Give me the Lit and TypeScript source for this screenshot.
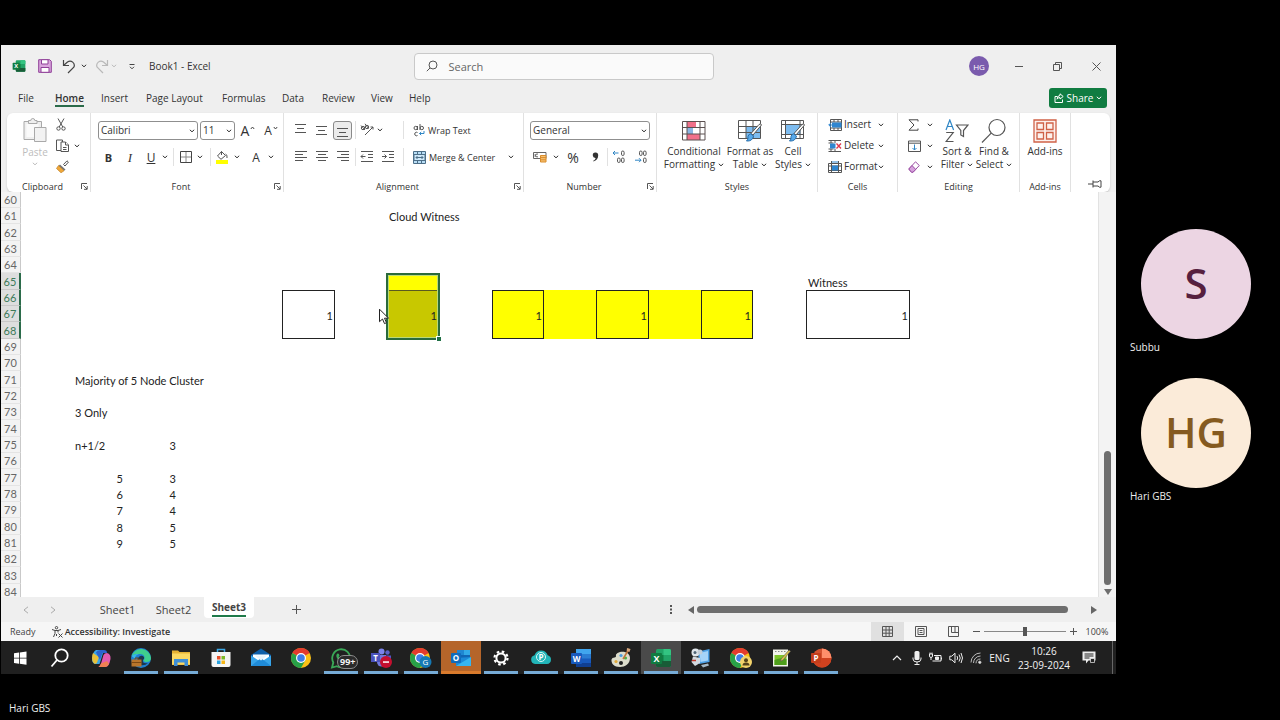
import { LitElement, html, css, nothing } from "lit";
import { customElement, state } from "lit/decorators.js";
import { classMap } from "lit/directives/class-map.js";

const chev = html`<svg class="chev" width="6" height="4" viewBox="0 0 6 4" fill="none" stroke="currentColor"><path d="M.8.8 3 2.8 5.2.8"/></svg>`;
const line = (d: string, w = 16, h = 16) =>
  html`<svg width=${w} height=${h} viewBox="0 0 ${w} ${h}" fill="none" stroke="#555"><path d=${d} /></svg>`;

const excelLogo = (s: number) => html`<svg width=${s} height=${s} viewBox="0 0 22 22">
  <rect x="6" y="2" width="15" height="18" rx="1.5" fill="#21a366"/><path d="M6 8h7.500v6H6z" fill="#107c41"/><path d="M13.500 2H19.500a1.500 1.500 0 0 1 1.500 1.500V8h-7.500z" fill="#33c481"/>
  <path d="M6 14h15v4.500a1.500 1.500 0 0 1-1.500 1.500h-12A1.500 1.500 0 0 1 6 18.500z" fill="#185c37"/><rect x="1" y="6" width="11" height="11" rx="1" fill="#107c41"/>
  <text x="6.500" y="14.800" font-size="9" font-weight="700" text-anchor="middle" fill="#fff" font-family="Open Sans, sans-serif">X</text></svg>`;

const chromeParts = html`<svg width="22" height="22" viewBox="0 0 22 22">
  <circle cx="11" cy="11" r="10" fill="#fbc116"/><path d="M11 11 2.340 6A10 10 0 0 1 19.660 6z" fill="#e33b2e"/>
  <path d="M2.340 6A10 10 0 0 0 11 21l4.500-8L11 11z" fill="#28a148"/><circle cx="11" cy="11" r="5" fill="#fff"/><circle cx="11" cy="11" r="3.800" fill="#3f7de8"/></svg>`;

const icons = {
  save: html`<svg width="14" height="14" viewBox="0 0 14 14" fill="#d9a5dc" stroke="#8f3f98"><path d="M.7.700h11l1.600 1.600v11H.7z"/><path d="M3.500.700h6.500v4.300H3.500z" fill="#fff"/><path d="M3 13.300V8.500h8v4.800z" fill="#fff"/></svg>`,
  undo: html`<svg width="14" height="15" viewBox="0 0 14 15" fill="none" stroke="#444" stroke-width="1.200"><path d="M1.500 1v5.500H7M1.800 6.200 5.500 3a4.200 4.200 0 0 1 6.300 5.200L6 14"/></svg>`,
  redo: html`<svg width="14" height="15" viewBox="0 0 14 15" fill="none" stroke="#b9b9b9" stroke-width="1.200"><path d="M12.500 1v5.500H7M12.200 6.200 8.500 3a4.200 4.200 0 0 0-6.300 5.200L8 14"/></svg>`,
  custom: html`<svg width="6" height="7" viewBox="0 0 6 7" fill="none" stroke="#444"><path d="M.5 1.500h5M1 3.800l2 2 2-2"/></svg>`,
  search: html`<svg width="12" height="12" viewBox="0 0 12 12" fill="none" stroke="#555"><circle cx="7" cy="5" r="4"/><path d="M4 8 .8 11.200"/></svg>`,
  share: html`<svg width="10" height="10" viewBox="0 0 10 10" fill="none" stroke="#fff"><path d="M3.500 3.500h-2.500v6h7.500V6.500M6 .8 9.200 3.500 6 6V4.500Q4 4.400 3 6.200 3.300 2.800 6 2.400z"/></svg>`,
  paste: html`<svg width="24" height="26" viewBox="0 0 24 26" fill="#efefef" stroke="#a9a9a9"><path d="M1 4.500h17.500v18H1z"/><path d="M3.500 7h12v13h-12z" fill="#fafafa" stroke="none"/><path d="M5.500 6.500v-3h2.300a2 2 0 0 1 4 0H14v3z"/><path d="M11.500 10.500h11.500v14H11.500z" fill="#f2f2f2"/></svg>`,
  cut: html`<svg width="10" height="13" viewBox="0 0 10 13" fill="none" stroke="#555"><path d="M2 .5 6.800 9M8 .5 3.200 9"/><circle cx="2.500" cy="10.500" r="1.700"/><circle cx="7.500" cy="10.500" r="1.700"/></svg>`,
  copy: html`<svg width="13" height="13" viewBox="0 0 13 13" fill="#fff" stroke="#555"><path d="M.5 1h6v10.500h-6z"/><path d="M5 3h4.500l3 3v6.500H5z"/><path d="M9.500 3v3h3M7 8.500h3.500M7 10.500h3.500"/></svg>`,
  painter: html`<svg width="13" height="13" viewBox="0 0 13 13"><path d="M7.500 4.500 11 .8l1.400 1.300L9 6z" fill="#fff" stroke="#555"/><path d="m4 4.500 5.500 5-1.200 1.300L2.500 6z" fill="#777"/><path d="M2.500 5.500 8 10.800l-3 2L.5 8.500z" fill="#f0a83a" stroke="#b87514" stroke-width=".6"/></svg>`,
  launch: html`<svg width="7" height="7" viewBox="0 0 7 7" fill="none" stroke="#555"><path d="M.5 6V.5H6M2.500 2.500 6 6M6.200 3v3.300H3"/></svg>`,
  border: html`<svg width="12" height="12" viewBox="0 0 12 12" fill="none" stroke="#444"><path d="M.5.500h11v11H.5z"/><path d="M6 1v10M1 6h10" stroke="#888"/></svg>`,
  fill: html`<svg width="14" height="14" viewBox="0 0 14 14" fill="none"><path d="M1 10h12v4H1z" fill="#ff0"/><path d="m6.500 1.500 4 4-4.500 3.800L2.500 6zM6.500 1.500V5M10.500 4q2 .500 1.500 4" stroke="#555"/></svg>`,
  orient: html`<svg width="14" height="14" viewBox="0 0 14 14" fill="none" stroke="#555"><circle cx="3" cy="5" r="1.700"/><circle cx="7" cy="4" r="1.700"/><path d="M1 2.500 5 7M5 .800 8.500 5.500M5 12 13 4M10.500 4H13v2.500"/></svg>`,
  wrap: html`<svg width="12" height="13" viewBox="0 0 12 13" fill="none" stroke="#555"><circle cx="2.700" cy="4" r="1.700"/><path d="M4.500 2v4M7 0v6"/><circle cx="8.800" cy="4" r="1.700"/><path d="M4.500 8.500a1.800 1.800 0 1 0 0 3"/><path d="M11 7v2.500H6.500M8.200 8 6.500 9.500l1.700 1.700" stroke="#2f86c5"/></svg>`,
  merge: html`<svg width="13" height="13" viewBox="0 0 13 13" fill="#b8ddf5" stroke="#4d6f88"><path d="M.5.500h12v12H.5z"/><path d="M1 3.500h11v6H1z" fill="#cfe9fa"/><path d="M4.500.500v3M8.500.500v3M4.500 9.500v3M8.500 9.500v3M3 6.500h7M4.500 5 3 6.500 4.500 8M8.500 5 10 6.500 8.500 8" fill="none"/></svg>`,
  money: html`<svg width="14" height="12" viewBox="0 0 14 12" fill="none" stroke="#666"><path d="M.5 1.500h12.500v6H.5z"/><path d="M5 3.200a1.500 1.500 0 1 0 0 2.500M2.200 3v3"/><path d="M7.500 4.500h5.500v6.500H7.500z" fill="#f7c173" stroke="#d98c2b"/><path d="M7.500 6.600H13M7.500 8.800H13" stroke="#d98c2b"/></svg>`,
  comma: html`<svg width="7" height="10" viewBox="0 0 7 10"><path d="M3.300.500a2.800 2.800 0 0 1 2.900 2.900C6.200 6 4.500 8.500 1.500 9.500L1.200 8.800C2.800 8 3.500 7 3.600 5.900A2.700 2.700 0 1 1 3.300.5z" fill="#333"/></svg>`,
  dec: (inc: boolean) => html`<svg width="14" height="14" viewBox="0 0 14 14" fill="none" stroke="#555"><rect x=${inc ? 9.5 : 5.5} y="1" width="2.600" height="4.500" rx="1.300"/><rect x="9.500" y="8" width="2.600" height="4.500" rx="1.300"/>
    ${inc ? html`<svg><rect x="5.500" y="8" width="2.600" height="4.500" rx="1.300" stroke="#555"/><path d="M6.500 3H1M3 1 1 3l2 2" stroke="#2f86c5"/></svg>` : html`<svg><rect x="9.500" y="1" width="2.600" height="4.500" rx="1.300" stroke="#555"/><path d="M1 10.200h6M5 8.200l2 2-2 2" stroke="#2f86c5"/></svg>`}</svg>`,
  cond: html`<svg width="24" height="20" viewBox="0 0 24 20" fill="none"><path d="M.5.500h22.500v18.500H.5z" fill="#fff"/><path d="M5 .500h9v6H5zM5 13h13v6H5z" fill="#f0708a"/><path d="M5 6.500h6V13H5z" fill="#8bb6e4"/><path d="M.5.500h22.500v18.500H.5zM5 .500V19M18 .500V19M.5 6.500H23M.5 13H23" stroke="#5b5050"/></svg>`,
  fmtTable: html`<svg width="26" height="24" viewBox="0 0 26 24" fill="none"><path d="M1.500 1.500h22v18h-22z" fill="#fff"/><path d="M9 7.500h14.500v12H9z" fill="#7dbcf0"/><path d="M1.500 1.500h22v18h-22zM9 1.500v18M16 1.500v18M1.500 7.500h22M1.500 13.500h22" stroke="#555"/><path d="M24.500 6 16 16l-2-1.500L22 5.500q2-1.500 2.500.5z" fill="#fff" stroke="#555"/><path d="M13.800 14.800 16.500 17q-1 5.500-7 5 2-1.500 1.500-4.500.5-2.500 2.800-2.700z" fill="#58a9ea" stroke="#2870ad"/></svg>`,
  cellSty: html`<svg width="26" height="24" viewBox="0 0 26 24" fill="none"><path d="M1.500 1.500h22v18h-22z" fill="#fff"/><path d="M6 5.500h14.500v10H6z" fill="#7dbcf0"/><path d="M1.500 1.500h22v18h-22zM5.500 1.500v18M20 1.500v18M1.500 5.500h22M1.500 15.500h22" stroke="#555"/><path d="M24.500 6 16 16l-2-1.500L22 5.500q2-1.500 2.500.5z" fill="#fff" stroke="#555"/><path d="M13.800 14.800 16.500 17q-1 5.500-7 5 2-1.500 1.500-4.500.5-2.500 2.800-2.700z" fill="#58a9ea" stroke="#2870ad"/></svg>`,
  insert: html`<svg width="14" height="12" viewBox="0 0 14 12" fill="none" stroke="#555"><path d="M2.500.500h11v11h-11zM2.500 3h11M2.500 9h11M6 .500V3M10 .500V3M6 9v2.500M10 9v2.500"/><path d="M4 3.500h9.500v5H4z" fill="#2f86d0" stroke="none"/><path d="M6 6H.8M3 3.800.8 6 3 8.200" stroke="#2f86d0"/></svg>`,
  del: html`<svg width="14" height="12" viewBox="0 0 14 12" fill="none" stroke="#555"><path d="M.5.500h12.500M.5 3h5M.5 9h5M.5 11.500h12.500M3 .500V3M7 .500V3M7 9v2.500M3 9v2.500"/><path d="M2 3.500h5.500v5H2z" fill="#2f86d0" stroke="none"/><path d="m8.500 3.500 4.500 5M13 3.500l-4.500 5" stroke="#e0364a" stroke-width="1.300"/></svg>`,
  format: html`<svg width="14" height="12" viewBox="0 0 14 12" fill="none" stroke="#555"><path d="M.5 2.500h13v9H.5zM.5 5h13M.5 9.500h13M3.500 0v11.500M10.500 0v11.500"/><path d="M4 4.500h6v5H4z" fill="#2f86d0" stroke="none"/><path d="M4 1h6" stroke="#2f86d0"/></svg>`,
  sigma: html`<svg width="11" height="12" viewBox="0 0 11 12" fill="none" stroke="#444"><path d="M10 2.500V.800H1L6 6l-5 5.200h9V9.500"/></svg>`,
  fillDown: html`<svg width="13" height="12" viewBox="0 0 13 12" fill="none" stroke="#555"><path d="M.5 1h12v10.500H.5zM.5 3.200h12"/><path d="M6.500 4.500V10M4.500 8l2 2 2-2" stroke="#2f86c5"/></svg>`,
  eraser: html`<svg width="12" height="12" viewBox="0 0 12 12" stroke="#9a4da3"><path d="M7.500.800 11.300 4.500 5 11.200H3.500L.8 8z" fill="#fff"/><path d="m4 4.500 3.800 4L5 11.200H3.500L.8 8z" fill="#d6a2dc"/></svg>`,
  sort: html`<svg width="24" height="24" viewBox="0 0 24 24" fill="none"><path d="M1 11 4.800 1l3.800 10M2.300 7.500h5" stroke="#2f86c5" stroke-width="1.200"/><path d="M1.200 13.500h7L1.200 22.500h7.300" stroke="#555" stroke-width="1.200"/><path d="M11.500 6h11.500l-4.500 5.500v6l-2.700-1.500v-4.500z" stroke="#555" stroke-width="1.200"/></svg>`,
  find: html`<svg width="26" height="26" viewBox="0 0 26 26" fill="none" stroke="#555" stroke-width="1.200"><circle cx="16" cy="9.500" r="8"/><path d="M10.200 15.200 1 24.500"/></svg>`,
  addins: html`<svg width="24" height="24" viewBox="0 0 24 24" fill="none" stroke="#cf6147" stroke-width="1.300"><path d="M1 1h22v22H1zM4 4h6.500v6.500H4zM13.500 4H20v6.500h-6.500zM4 13.500h6.500V20H4zM13.500 13.500H20V20h-6.500z" fill="#fdf1ed"/></svg>`,
  pin: html`<svg width="14" height="8" viewBox="0 0 14 8" fill="none" stroke="#444"><path d="M0 4h5M5 .500v7M5 2h5l1.500-1.200H13v6.400h-1.500L10 6H5"/></svg>`,
  access: html`<svg width="13" height="12" viewBox="0 0 13 12" fill="none" stroke="#444"><circle cx="5.500" cy="1.700" r="1.200"/><path d="M1 3.500 4 4.500v3L2.500 11M10 3.500 7 4.500v2M4 4.500h3M5.500 8v2M7.500 7.500l4 4M11.500 7.500l-4 4"/></svg>`,
};

const apps: { name: string; icon: unknown; run?: boolean; cls?: string; badge?: string }[] = [
  { name: "Start", icon: html`<svg width="22" height="22" viewBox="0 0 22 22"><path d="M4 6.200l5-.7v5.200H4zM9.800 5.400 16.500 4.500v6.200h-6.700zM4 11.500h5v5.200l-5-.7zM9.800 11.500h6.700v6.200l-6.700-.9z" fill="#fff"/></svg>` },
  { name: "Search", icon: html`<svg width="22" height="22" viewBox="0 0 22 22" fill="none" stroke="#fff" stroke-width="1.800"><circle cx="11.500" cy="8.500" r="6.200"/><path d="m7 13-5.500 6.500"/></svg>` },
  { name: "Copilot", icon: html`<svg width="22" height="22" viewBox="0 0 22 22"><path d="M6 3h8L9.500 17H5q-3-1-3-5 1-8 4-9z" fill="#3aa5e8"/><path d="M2 11q0-3 1-5l6 4-2 5.500q-1 2-3 1Q2 15 2 11z" fill="#e9c13a"/><path d="M14 3q3 0 3 3h-4.500L10 13 6 5.500Q7 3 10 3z" fill="#2b63cf"/><path d="M17 6q4 1 3.500 6-1.500 8-5 8H8.500q2-1 3-5l2-7q1-2 3.500-2z" fill="#e35bb0"/><path d="M11 16.500 17 14l2 3q-1.500 3-3.500 3H8.500q1.500-1 2.500-3.500z" fill="#f08052"/></svg>` },
  { name: "Edge", run: true, icon: html`<svg width="22" height="22" viewBox="0 0 22 22"><circle cx="11" cy="11" r="10" fill="#1f7fd0"/><path d="M1.500 9A10 10 0 0 1 21 11q0 4-4.500 4-3 0-3-2 1.500-1 1-3Q13.500 7 10 7 4 6.500 1.500 9z" fill="#3fcf8d"/><path d="M1.500 9Q4 6.500 9 7q-4 1-4 5-2-2-3.500-3z" fill="#35b8e8"/><path d="M14 10q-3-3-6 1-1 4 2 7 5 1 8-2-6 1-5-3 1.500-1 1-3z" fill="#1f1f1f" opacity=".75"/><path d="M1.500 12.500h10v7h-10z" fill="#b9752b"/><path d="M5 12.500v-1.500h3v1.500M1.500 15.500h10" stroke="#7c4913" fill="none"/></svg>` },
  { name: "File Explorer", run: true, icon: html`<svg width="22" height="22" viewBox="0 0 22 22"><path d="M2 3.500h6l1.500 1.500H20v13H2z" fill="#e6b234"/><path d="M2 6.500h18v11H2z" fill="#fbd862"/><path d="M4 12h14v7h-3.500v-3.500h-7V19H4z" fill="#3f8fd6"/></svg>` },
  { name: "Store", icon: html`<svg width="22" height="22" viewBox="0 0 22 22"><path d="M7.500 5.500V2.500h7v3" fill="none" stroke="#3ba7e5" stroke-width="1.500"/><path d="M1.500 5h19v13a2 2 0 0 1-2 2h-15a2 2 0 0 1-2-2z" fill="#f4f4f4"/><path d="M7 9h3.500v3.500H7z" fill="#e8502a"/><path d="M11.500 9H15v3.500h-3.500z" fill="#7db928"/><path d="M7 13.500h3.500V17H7z" fill="#2aa3e0"/><path d="M11.500 13.500H15V17h-3.500z" fill="#f6b616"/></svg>` },
  { name: "Mail", icon: html`<svg width="22" height="22" viewBox="0 0 22 22"><path d="M1 8 11 1.500 21 8v2H1z" fill="#0f5fa8"/><path d="M3 7.500h16v8H3z" fill="#fff"/><path d="M1 8.500 11 15 21 8.500V19H1z" fill="#38a5ea"/><path d="M1 19 11 11 21 19z" fill="#1f8bd8"/><path d="m5 8.500 6 5 6-5z" fill="#e8f4fc"/></svg>` },
  { name: "Chrome", icon: chromeParts },
  { name: "WhatsApp", run: true, badge: "99+", icon: html`<svg width="22" height="22" viewBox="0 0 22 22" fill="none"><path d="M2 20.500 3.300 15.500A9 9 0 1 1 7 19.200z" stroke="#3aa857" stroke-width="1.800"/><path d="M7.500 6.500q1.500-.5 2 2l-.8 1.200q1 2 3 2.800l1.200-1q2.200.6 1.800 2.200-1.500 2-4 1Q7 13 6.300 9q0-1.800 1.200-2.500z" fill="#3aa857"/></svg>` },
  { name: "Teams", run: true, icon: html`<svg width="22" height="22" viewBox="0 0 22 22"><circle cx="11.500" cy="4.500" r="3" fill="#7b83eb"/><circle cx="17.500" cy="5.500" r="2.200" fill="#5b62c8"/><path d="M7 8h9v7a4.500 4.500 0 0 1-9 0z" fill="#7078dc"/><path d="M16 8.500h5v5h-5z" fill="#5059c9"/><path d="M1 6h9v9H1z" fill="#4b53bc"/><text x="5.500" y="13.500" font-size="8" font-weight="700" text-anchor="middle" fill="#fff" font-family="Open Sans, sans-serif">T</text><circle cx="16" cy="15" r="6" fill="#c50f2f"/><path d="M13 14.300h6v1.500h-6z" fill="#fff"/></svg>` },
  { name: "Chrome, profile G", run: true, icon: html`<svg width="24" height="22" viewBox="0 0 24 22"><circle cx="11" cy="11" r="10" fill="#fbc116"/><path d="M11 11 2.340 6A10 10 0 0 1 19.660 6z" fill="#e33b2e"/><path d="M2.340 6A10 10 0 0 0 11 21l4.500-8L11 11z" fill="#28a148"/><circle cx="11" cy="11" r="5" fill="#fff"/><circle cx="11" cy="11" r="3.800" fill="#3f7de8"/><circle cx="16.500" cy="15" r="6" fill="#1579b5"/><text x="16.500" y="18" font-size="8" text-anchor="middle" fill="#fff" font-family="Open Sans, sans-serif">G</text></svg>` },
  { name: "Outlook", run: true, cls: "alert", icon: html`<svg width="22" height="22" viewBox="0 0 22 22"><path d="M7 3h13v14H7z" fill="#1066b5"/><path d="M13.500 3H20v5h-6.500z" fill="#32a9e7"/><path d="M7 3h6.500v5H7z" fill="#1f86d2"/><path d="m6 11 15-1v9H6z" fill="#1b8ad8"/><path d="m6 19 15-9v9z" fill="#35b5f0"/><rect x="1" y="6" width="10" height="10" rx="1" fill="#0f6cbd"/><text x="6" y="14" font-size="8" font-weight="700" text-anchor="middle" fill="#fff" font-family="Open Sans, sans-serif">O</text></svg>` },
  { name: "Settings", run: true, icon: html`<svg width="22" height="22" viewBox="0 0 22 22" fill="none" stroke="#fff"><circle cx="11" cy="11" r="4.600" stroke-width="2"/><circle cx="11" cy="11" r="6.500" stroke-width="2.200" stroke-dasharray="2.550 2.550"/></svg>` },
  { name: "Cloud", run: true, icon: html`<svg width="22" height="22" viewBox="0 0 22 22"><path d="M5 17a4.500 4.500 0 0 1-.5-8.800 7 7 0 0 1 13.200 0A4.500 4.500 0 0 1 17 17z" fill="#22b5b8"/><circle cx="11" cy="10" r="4.500" fill="none" stroke="#d9f5f5"/><text x="11" y="13" font-size="8" font-weight="700" text-anchor="middle" fill="#fff" font-family="Open Sans, sans-serif">P</text></svg>` },
  { name: "Word", run: true, icon: html`<svg width="22" height="22" viewBox="0 0 22 22"><rect x="6" y="2" width="15" height="18" rx="1.500" fill="#2b7cd3"/><path d="M6 2h15v5H6z" fill="#41a5ee"/><path d="M6 11.500h15V16H6z" fill="#185abd"/><path d="M6 16h15v4H6z" fill="#103f91"/><rect x="1" y="6" width="11" height="11" rx="1" fill="#185abd"/><text x="6.500" y="14.500" font-size="8" font-weight="700" text-anchor="middle" fill="#fff" font-family="Open Sans, sans-serif">W</text></svg>` },
  { name: "Paint", run: true, icon: html`<svg width="22" height="22" viewBox="0 0 22 22"><path d="M10 5c6-1 10 2 10 6 0 6-5 9-10 9-6 0-9-3.500-8.500-7.500q.5-2 3-2 2-.5 1.500-3Q7 5.500 10 5z" fill="#dcdccb"/><circle cx="11" cy="8.500" r="1.600" fill="#4b9be0"/><circle cx="15.500" cy="11" r="1.600" fill="#4cb04c"/><circle cx="6" cy="14.500" r="1.600" fill="#e0a93a"/><circle cx="11" cy="16" r="2" fill="#1f1f1f"/><path d="m13 12 6-10" stroke="#c0763b" stroke-width="1.500"/><path d="m17 1 3.500 1-1 3-2.800-1z" fill="#d9a77c"/></svg>` },
  { name: "Excel", run: true, cls: "current", icon: excelLogo(22) },
  { name: "Remote tools", run: true, icon: html`<svg width="22" height="22" viewBox="0 0 22 22"><path d="M8 4.500 19.500 2v13L9 17z" fill="#4ea1e6"/><path d="m9.500 6 8.500-2v9.500l-7.500 1.500z" fill="#a5d3f8"/><path d="m11 18 7-1.500 1 2-6 2z" fill="#a6b8c6"/><path d="M3 9.500 10 11v5l-5 3-3.500-4z" fill="#d3dae0"/><circle cx="5.500" cy="5.500" r="4" fill="#dfe5ea"/><circle cx="10" cy="5" r="2.500" fill="#c3ced8"/><circle cx="5" cy="5.500" r="1.500" fill="#4f6475"/><path d="M2 13.500h4" stroke="#c0392b" stroke-width="1.500"/></svg>` },
  { name: "Chrome, profile", run: true, icon: html`<svg width="24" height="22" viewBox="0 0 24 22"><circle cx="11" cy="11" r="10" fill="#fbc116"/><path d="M11 11 2.340 6A10 10 0 0 1 19.660 6z" fill="#e33b2e"/><path d="M2.340 6A10 10 0 0 0 11 21l4.500-8L11 11z" fill="#28a148"/><circle cx="11" cy="11" r="5" fill="#fff"/><circle cx="11" cy="11" r="3.800" fill="#3f7de8"/><circle cx="17" cy="15" r="6" fill="#f3d36b"/><circle cx="17" cy="13.200" r="2" fill="#55431c"/><path d="M13.500 18.500q0-3 3.500-3t3.500 3z" fill="#55431c"/></svg>` },
  { name: "Notepad++", run: true, icon: html`<svg width="22" height="22" viewBox="0 0 22 22"><path d="M3 2.500h15v17H3z" fill="#f2f4ea"/><path d="M4.500 8h12v10h-12z" fill="#7cc528"/><path d="M4.500 13q6-3 12-1v6h-12z" fill="#4e9e1b"/><path d="M5 4.500h11" stroke="#888" stroke-dasharray="1.500 1.500"/><path d="m11 12 8-9 1.500 1.200-7.500 9-2.500 1z" fill="#d8c04a" stroke="#555" stroke-width=".6"/></svg>` },
  { name: "PowerPoint", run: true, icon: html`<svg width="22" height="22" viewBox="0 0 22 22"><circle cx="12" cy="11" r="9.500" fill="#d35230"/><path d="M12 1.500a9.500 9.500 0 0 1 9.500 9.500H12z" fill="#ff8f6b"/><path d="M2.500 11h19a9.500 9.500 0 0 1-19 0z" fill="#d0421f"/><rect x="1" y="6" width="10" height="10" rx="1" fill="#c43e1c"/><text x="6" y="14" font-size="8" font-weight="700" text-anchor="middle" fill="#fff" font-family="Open Sans, sans-serif">P</text></svg>` },
];

type Cell = { text?: string; kind?: string; rows?: number; cols?: number };
const COLS = 21;
const cells: Record<string, Cell> = {
  "61:7": { text: "Cloud Witness" },
  "65:7": { kind: "yellow picked" },
  "65:15": { text: "Witness" },
  "66:5": { text: "1", kind: "num box", rows: 3 },
  "66:7": { text: "1", kind: "num shaded", rows: 3 },
  "66:9": { text: "1", kind: "num yellow box", rows: 3 },
  "66:10": { kind: "yellow", rows: 3 },
  "66:11": { text: "1", kind: "num yellow box", rows: 3 },
  "66:12": { kind: "yellow", rows: 3 },
  "66:13": { text: "1", kind: "num yellow box", rows: 3 },
  "66:15": { text: "1", kind: "num box", rows: 3, cols: 2 },
  "71:1": { text: "Majority of 5 Node Cluster" },
  "73:1": { text: "3 Only" },
  "75:1": { text: "n+1/2" },
  "75:2": { text: "3", kind: "num" },
};
[[5, 3], [6, 4], [7, 4], [8, 5], [9, 5]].forEach(([n, v], i) => {
  cells[`${77 + i}:1`] = { text: String(n), kind: "num" };
  cells[`${77 + i}:2`] = { text: String(v), kind: "num" };
});
const covered = new Set<string>();
for (const [key, c] of Object.entries(cells)) {
  const [r, k] = key.split(":").map(Number);
  for (let i = 0; i < (c.rows ?? 1); i++)
    for (let j = 0; j < (c.cols ?? 1); j++) if (i || j) covered.add(`${r + i}:${k + j}`);
}

const common = css`
  * { box-sizing: border-box; }
  button { font: inherit; color: inherit; background: none; border: 0; padding: 0; margin: 0; display: flex; align-items: center; justify-content: center; white-space: nowrap; }
  svg { display: block; flex: none; }
`;

@customElement("excel-ribbon")
class ExcelRibbon extends LitElement {
  static styles = [common, css`
    :host { display: grid; grid-template-columns: 84px 193px 240px 133px 161px 80px 122px 51px 1fr; height: 79px; margin: 0 6px; background: #fff; border-radius: 6px; box-shadow: 0 1px 2px #c4c4c4; color: #333; font-size: 10px; line-height: 13px; }
    .group { display: flex; flex-direction: column; border-right: 1px solid #e1e1e1; min-width: 0; }
    .body { flex: 1; min-height: 0; }
    .foot { display: grid; height: 18px; align-items: center; text-align: center; font-size: 9px; white-space: nowrap; }
    .foot.launches { grid-template-columns: 1fr 12px; }
    .lines { display: flex; flex-direction: column; gap: 7px; padding-top: 7px; }
    .line { display: grid; height: 20px; align-items: center; justify-items: center; }
    .sep { width: 1px; height: 18px; background: #e1e1e1; }
    .clip { display: grid; grid-template-columns: 42px 28px; padding: 4px 0 0 7px; }
    .big { flex-direction: column; justify-content: flex-start; }
    .faded { color: #bdbdbd; }
    .clip .big { gap: 3px; }
    .stack { display: grid; grid-template-rows: repeat(3, 21px); align-items: center; padding-top: 1px; }
    .stack button { gap: 8px; justify-content: flex-start; }
    .clip .stack { padding-top: 0; margin-top: -3px; }
    .clip .stack button { gap: 5px; }
    .font1 { grid-template-columns: 100px 35px 22px 20px; column-gap: 2px; padding-left: 7px; justify-content: start; }
    .font2 { grid-template-columns: 21px 22px 20px 8px 8px 17px 12px 8px 16px 14px 24px 6px; padding-left: 7px; justify-content: start; }
    .al1, .al2 { padding-left: 6px; }
    .al1 { grid-template-columns: 21px 21px 21px 4px 20px 6px 30px 1fr; }
    .al2 { grid-template-columns: 21px 21px 21px 4px 20px 22px 14px 1fr; }
    .far { justify-self: end; margin-right: 9px; }
    .cmd { justify-self: start; gap: 3px; font-size: 9px; }
    .cmd .chev { margin-left: 10px; }
    .boxed { width: 19px; height: 19px; border: 1px solid #8a8a8a; border-radius: 3px; background: #ececec; }
    .num1 { padding: 0 6px; }
    .num2 { grid-template-columns: 20px 11px 24px 20px 4px 20px 24px; padding-left: 6px; }
    .field { position: relative; width: 100%; display: block; }
    .field .chev { position: absolute; right: 3px; top: 8px; pointer-events: none; }
    select { appearance: none; width: 100%; height: 19px; display: block; font: inherit; color: #333; background: #fff; border: 1px solid #8f8f8f; border-radius: 3px; padding: 0 2px; }
    .glyph { font-size: 11px; }
    .glyph.lg { font-size: 14px; }
    .glyph.md { font-size: 12px; }
    .b { font-weight: 700; } .i { font-style: italic; font-family: "Liberation Serif", serif; font-size: 13px; } .u { text-decoration: underline; }
    .grow { gap: 1px; align-items: flex-start; }
    .grow .chev { margin-top: 2px; }
    .tiles { display: grid; padding-top: 4px; }
    .tiles .pic { height: 28px; display: flex; align-items: center; justify-content: center; }
    .tiles .big span { display: flex; align-items: center; gap: 3px; }
    .styles { grid-template-columns: 60px 52px 34px; padding-left: 7px; }
    .cells { padding-left: 10px; }
    .cells button { display: grid; grid-template-columns: 16px 34px 6px; justify-items: start; gap: 0; }
    .edit { display: grid; grid-template-columns: 38px 40px 34px; padding-left: 1px; }
    .edit .tiles { grid-column: 2 / 4; grid-template-columns: 40px 34px; }
    .edit .stack { padding-left: 9px; }
    .edit .stack button { display: grid; grid-template-columns: 19px 6px; gap: 0; }
    .tail { display: flex; align-items: flex-end; justify-content: center; padding: 0 0 7px 8px; }
  `];
  render() {
    const foot = (t: string, launch = false) => html`<div class=${classMap({ foot: true, launches: launch })}><span>${t}</span>${launch ? html`<button aria-label="${t} settings">${icons.launch}</button>` : nothing}</div>`;
    const tile = (pic: unknown, a: string, b?: string) => html`<button class="big"><span class="pic">${pic}</span><span>${a}</span>${b ? html`<span>${b}${chev}</span>` : nothing}</button>`;
    return html`
      <div class="group"><div class="body clip">
        <button class="big faded">${icons.paste}<span>Paste</span>${chev}</button>
        <div class="stack"><button aria-label="Cut">${icons.cut}</button><button aria-label="Copy">${icons.copy}${chev}</button><button aria-label="Format Painter">${icons.painter}</button></div>
      </div>${foot("Clipboard", true)}</div>
      <div class="group"><div class="body lines">
        <div class="line font1">
          <label class="field"><select aria-label="Font"><option>Calibri</option></select>${chev}</label>
          <label class="field"><select aria-label="Font size"><option>11</option></select>${chev}</label>
          <button class="grow glyph lg" aria-label="Increase font size">A<svg class="chev" width="5" height="4" viewBox="0 0 5 4" fill="none" stroke="#444"><path d="m.8 3 1.700-2 1.700 2"/></svg></button>
          <button class="grow glyph md" aria-label="Decrease font size">A<svg class="chev" width="5" height="4" viewBox="0 0 5 4" fill="none" stroke="#444"><path d="m.8 1 1.700 2 1.700-2"/></svg></button>
        </div>
        <div class="line font2">
          <button class="glyph b">B</button><button class="glyph i">I</button><button class="glyph md u">U</button><button aria-label="Underline options">${chev}</button><i class="sep"></i>
          <button aria-label="Borders">${icons.border}</button><button aria-label="Border options">${chev}</button><i class="sep"></i>
          <button aria-label="Fill colour">${icons.fill}</button><button aria-label="Fill options">${chev}</button><button class="glyph md">A</button><button aria-label="Font colour options">${chev}</button>
        </div>
      </div>${foot("Font", true)}</div>
      <div class="group"><div class="body lines">
        <div class="line al1">
          <button aria-label="Top align">${line("M2 2.500h11M4 6.500h7M2 10.500h11")}</button><button aria-label="Middle align">${line("M2 4.500h11M4 8.500h7M2 12.500h11")}</button><button class="boxed" aria-label="Bottom align">${line("M2 6.500h11M4 10.500h7M2 14.500h11")}</button><i class="sep"></i>
          <button aria-label="Orientation">${icons.orient}</button><button aria-label="Orientation options">${chev}</button><i class="sep far"></i>
          <button class="cmd">${icons.wrap}Wrap Text</button>
        </div>
        <div class="line al2">
          <button aria-label="Align left">${line("M2 2.500h12M2 5.500h8M2 8.500h12M2 11.500h8")}</button><button aria-label="Centre">${line("M2 2.500h12M4 5.500h8M2 8.500h12M4 11.500h8")}</button><button aria-label="Align right">${line("M2 2.500h12M6 5.500h8M2 8.500h12M6 11.500h8")}</button><i class="sep"></i>
          <button aria-label="Decrease indent">${line("M2 2.500h12M9 5.500h5M9 8.500h5M2 12.500h12M6.500 7.500H2M4 5.500l-2 2 2 2")}</button><button aria-label="Increase indent">${line("M2 2.500h12M9 5.500h5M9 8.500h5M2 12.500h12M2 7.500h4.500M4.500 5.500l2 2-2 2")}</button><i class="sep far"></i>
          <button class="cmd">${icons.merge}Merge &amp; Center${chev}</button>
        </div>
      </div>${foot("Alignment", true)}</div>
      <div class="group"><div class="body lines">
        <div class="line num1"><label class="field"><select aria-label="Number format"><option>General</option></select>${chev}</label></div>
        <div class="line num2">
          <button aria-label="Accounting format">${icons.money}</button><button aria-label="Accounting options">${chev}</button><button class="glyph lg">%</button><button aria-label="Comma style">${icons.comma}</button><i class="sep"></i>
          <button aria-label="Increase decimal">${icons.dec(true)}</button><button aria-label="Decrease decimal">${icons.dec(false)}</button>
        </div>
      </div>${foot("Number", true)}</div>
      <div class="group"><div class="body tiles styles">${tile(icons.cond, "Conditional", "Formatting")}${tile(icons.fmtTable, "Format as", "Table")}${tile(icons.cellSty, "Cell", "Styles")}</div>${foot("Styles")}</div>
      <div class="group"><div class="body stack cells"><button>${icons.insert}<span>Insert</span>${chev}</button><button>${icons.del}<span>Delete</span>${chev}</button><button>${icons.format}<span>Format</span>${chev}</button></div>${foot("Cells")}</div>
      <div class="group"><div class="body edit">
        <div class="stack"><button aria-label="Sum">${icons.sigma}${chev}</button><button aria-label="Fill">${icons.fillDown}${chev}</button><button aria-label="Clear">${icons.eraser}${chev}</button></div>
        <div class="tiles">${tile(icons.sort, "Sort &", "Filter")}${tile(icons.find, "Find &", "Select")}</div>
      </div>${foot("Editing")}</div>
      <div class="group"><div class="body tiles">${tile(icons.addins, "Add-ins")}</div>${foot("Add-ins")}</div>
      <div class="tail"><button aria-label="Pin ribbon">${icons.pin}</button></div>`;
  }
}

@customElement("excel-sheet")
class ExcelSheet extends LitElement {
  static styles = [common, css`
    :host { display: grid; grid-template-columns: 1fr 18px; min-height: 0; overflow: hidden; background: #fff; }
    .view { overflow: hidden; min-width: 0; position: relative; }
    table { width: 100%; table-layout: fixed; border-spacing: 0; font: 11px/14px Lato, sans-serif; color: #222; }
    col { width: 52px; } col:nth-child(3n + 4) { width: 53px; } col.head { width: 20px; } col.rest { width: auto; }
    tr { height: 16px; } tr:nth-child(3n) { height: 17px; }
    th, td { padding: 2px 2px 0; white-space: nowrap; text-align: left; font-weight: 400; }
    th { background: #f3f3f3; color: #666; text-align: center; padding: 1px 0 0; border-right: 1px solid #c9c9c9; border-bottom: 1px solid #e4e4e4; }
    th.on { background: #dedede; color: #3d7a5a; border-right: 2px solid #2b6b4a; border-bottom-color: #c8c8c8; }
    .num { text-align: right; }
    .yellow { background: #ff0; }
    .shaded { background: #c8c800; box-shadow: inset 0 1px #5a5a20; }
    .box { outline: 1px solid #222; outline-offset: -1px; }
    .picked { position: relative; }
    .selection { position: absolute; left: -1px; right: -1px; top: 0; height: 67px; border: 2px solid #2a6a3c; box-shadow: inset 0 0 0 1px #b9d978; }
    .selection::after { content: ""; position: absolute; right: -3px; bottom: -3px; width: 4px; height: 4px; background: #1f6f45; border: 1px solid #fff; box-sizing: content-box; border-width: 1px 0 0 1px; }
    .cursor { position: absolute; left: 377px; top: 116px; }
    .vbar { background: #f3f3f3; border-left: 1px solid #e2e2e2; display: flex; flex-direction: column; justify-content: flex-end; align-items: center; gap: 4px; padding-bottom: 2px; }
    .thumb { width: 7px; height: 134px; border-radius: 4px; background: #6e6e6e; }
  `];
  render() {
    const rows = Array.from({ length: 25 }, (_, i) => 60 + i);
    const cols = Array.from({ length: COLS }, (_, i) => i);
    return html`
      <div class="view">
        <table>
          <colgroup><col class="head" />${cols.map((c) => html`<col class=${c === COLS - 1 ? "rest" : ""} />`)}</colgroup>
          <tbody>${rows.map((r) => html`<tr>
            <th scope="row" class=${classMap({ on: r >= 65 && r <= 68 })}>${r}</th>
            ${cols.map((k) => {
              if (covered.has(`${r}:${k}`)) return nothing;
              const c = cells[`${r}:${k}`] ?? {};
              return html`<td class=${c.kind ?? ""} rowspan=${c.rows ?? 1} colspan=${c.cols ?? 1}>${c.text ?? nothing}${c.kind?.includes("picked") ? html`<div class="selection"></div>` : nothing}</td>`;
            })}
          </tr>`)}</tbody>
        </table>
        <svg class="cursor" width="12" height="17" viewBox="0 0 12 17" fill="#fff" stroke="#222"><path d="M1.500 1.200v12.500l3-2.700 2 4.600 2-.9-2-4.500h4z"/></svg>
      </div>
      <div class="vbar"><div class="thumb"></div><svg width="8" height="6" viewBox="0 0 8 6"><path d="M0 0h8L4 6z" fill="#6e6e6e"/></svg></div>`;
  }
}

@customElement("task-bar")
class TaskBar extends LitElement {
  static styles = [common, css`
    :host { display: flex; height: 33px; background: #202020; color: #f2f2f2; font-size: 11px; }
    .apps { display: flex; }
    .app { position: relative; width: 40px; height: 33px; }
    .app.run::after { content: ""; position: absolute; left: 3px; right: 3px; bottom: 0; height: 3px; background: #76abd6; }
    .alert { background: #b5652a; } .alert.run::after { background: #d97a2c; left: 0; right: 0; }
    .current { background: #4a4a4a; }
    .badge { position: absolute; left: 16px; top: 14px; border: 1px solid #8b8b8b; background: #2b2b2b; border-radius: 8px; padding: 0 2px; font-size: 9px; font-weight: 700; line-height: 12px; }
    .tray { margin-left: auto; display: grid; grid-template-columns: 20px 19px 20px 20px 20px 27px 62px 28px 13px; justify-items: center; align-items: center; }
    .tray span { font-size: 10px; }
    .clock { text-align: center; line-height: 14px; font-size: 10px; }
    .edge { justify-self: end; width: 1px; height: 100%; background: #666; margin-right: 3px; }
  `];
  render() {
    return html`
      <div class="apps">${apps.map((a) => html`<button class="app ${a.run ? "run" : ""} ${a.cls ?? ""}" aria-label=${a.name}>${a.icon}${a.badge ? html`<span class="badge">${a.badge}</span>` : nothing}</button>`)}</div>
      <div class="tray">
        <svg width="10" height="6" viewBox="0 0 10 6" fill="none" stroke="#eee" stroke-width="1.200"><path d="m1 5 4-4 4 4"/></svg>
        <svg width="10" height="14" viewBox="0 0 10 14"><rect x="2.500" y="0" width="5" height="9" rx="1.500" fill="#eee"/><path d="M1 6.500v1.500a4 3 0 0 0 8 0V6.500M5 11v2.500M2.500 13.500h5" stroke="#eee" fill="none"/></svg>
        <svg width="14" height="11" viewBox="0 0 14 11" fill="none" stroke="#eee"><path d="M5 3.500h7v5.500H3.500M12.500 5.500v2M.5 2v2q0 1.500 1.500 1.500T3.500 4V2zM1 .5V2M3 .5V2M2 5.500V8"/><path d="M6.500 5h3v2.500h-3z" fill="#eee"/></svg>
        <svg width="14" height="12" viewBox="0 0 14 12" fill="none" stroke="#eee"><path d="M.8 4.200h2L6 1.200v9.600L2.800 7.800h-2zM8 4q1.300 2 0 4M10 2.500q2.500 3.500 0 7M12 1q3 5 0 10"/></svg>
        <svg width="12" height="12" viewBox="0 0 12 12" fill="none" stroke="#bbb"><path d="M1 10.500A9.500 9.500 0 0 1 10.500 1M3.500 11A7 7 0 0 1 10.500 4M6 11.300A4.500 4.500 0 0 1 10.500 7"/><circle cx="9.800" cy="10.300" r="1.200" fill="#eee"/></svg>
        <span>ENG</span>
        <div class="clock">10:26<br />23-09-2024</div>
        <svg width="14" height="13" viewBox="0 0 14 13"><path d="M.5.500h13v9h-7L4 12.500v-3H.5z" fill="#eee"/><path d="M2.500 3h9M2.500 5h9M2.500 7h5" stroke="#222"/><path d="M8.500 7.500h4v4h-4z" fill="#222" stroke="#eee" stroke-width=".7"/></svg>
        <i class="edge"></i>
      </div>`;
  }
}

@customElement("app-root")
class AppRoot extends LitElement {
  @state() private tab = "Home";
  @state() private sheet = "Sheet3";
  static styles = [common, css`
    :host { display: grid; grid-template: 45px minmax(0, 1fr) 46px / minmax(0, 1fr) 164px; height: 100vh; background: #000; color: #333; font-family: "Open Sans", "Noto Sans", sans-serif; }
    .window { grid-area: 2 / 1; margin-left: 1px; display: grid; grid-template-rows: 42px 26px 79px minmax(0, 1fr) 25px 19px 33px; background: #efefef; font-size: 10px; }
    .title { display: grid; grid-template-columns: minmax(0, 69fr) 300px minmax(0, 67fr); align-items: center; }
    .quick { display: grid; grid-template-columns: 26px 26px 22px 7px 22px 10px 26px auto; justify-items: center; align-items: center; padding-left: 5px; justify-content: start; }
    .quick .redo { justify-self: end; }
    .quick .name { margin-left: 4px; color: #333; white-space: nowrap; }
    .pale { color: #bbb; }
    .search { display: flex; align-items: center; gap: 10px; height: 27px; padding: 0 11px; background: #fafafa; border: 1px solid #c9c9c9; border-radius: 4px; }
    .search input { flex: 1; min-width: 0; border: 0; background: none; outline: 0; font: inherit; font-size: 11px; padding: 0; }
    .search input::placeholder { color: #666; opacity: 1; }
    .sys { display: grid; grid-template-columns: 20px 39px 39px 39px; justify-content: end; align-items: center; column-gap: 0; }
    .avatar { width: 20px; height: 20px; border-radius: 50%; background: #7a5bad; color: #fff; font-size: 8px; }
    .sys .avatar { margin-left: -10px; }
    .tabs { display: grid; grid-template-columns: 37px 46px 45px 76px 60px 40px 49px 38px 40px 1fr; padding: 0 9px 4px 17px; align-items: center; }
    .tabs button { justify-self: start; }
    .tab { height: 18px; font-size: 10px; border-bottom: 2px solid transparent; padding-top: 2px; }
    .tab.on { font-weight: 600; border-color: #2b6b4a; }
    .tabs .share { justify-self: end; gap: 3px; height: 20px; width: 58px; background: #107c41; color: #fff; border-radius: 3px; }
    .sheets { display: grid; grid-template-columns: 669px 1fr; align-items: center; }
    .names { display: grid; grid-template-columns: 26px 27px 21px 61px 51px 60px 74px; height: 25px; padding-left: 12px; color: #444; font-size: 11px; }
    .names button { height: 25px; }
    .names .gap { grid-column: 3; }
    .names .on { background: #fff; font-weight: 700; height: 21px; margin: 0 5px 0 5px; border-radius: 0 0 4px 4px; font-size: 10px; }
    .on span { border-bottom: 2px solid #1f7a4a; line-height: 16px; }
    .hbar { display: grid; grid-template-columns: 3px 12px 1fr 36px; align-items: center; padding-right: 6px; column-gap: 6px; }
    .thumb { height: 7px; border-radius: 4px; background: #6e6e6e; }
    .hbar svg:last-child { margin-left: 17px; }
    .hbar .left { margin-left: 9px; }
    .status { display: flex; align-items: center; background: #f6f6f6; padding: 0 2px 0 9px; font-size: 9px; color: #444; }
    .status .acc { margin-left: 15px; gap: 1px; font-weight: 600; color: #333; }
    .views { margin-left: auto; display: grid; grid-template-columns: 33px 33px 32px; }
    .views button { height: 19px; } .views .on { background: #e0e0e0; }
    .zoom { display: grid; grid-template-columns: 13px 84px 13px 34px; align-items: center; justify-items: center; padding-left: 1px; }
    input[type="range"] { appearance: none; width: 82px; height: 10px; margin: 0; background: linear-gradient(#888, #888) center / 100% 1px no-repeat; }
    input[type="range"]::-webkit-slider-thumb { appearance: none; width: 4px; height: 9px; background: #555; }
    .people { grid-area: 1 / 2 / 4 / 3; padding: 229px 14px 0 14px; display: flex; flex-direction: column; gap: 23px; color: #eee; font-size: 10px; }
    .person { display: flex; flex-direction: column; gap: 1px; line-height: 15px; margin: 0; }
    .face { width: 110px; height: 110px; margin-left: 11px; border-radius: 50%; display: flex; align-items: center; justify-content: center; padding-bottom: 3px; font-size: 42px; font-weight: 600; background: #ecd5e3; color: #56203f; }
    .face.tan { background: #fbebd9; color: #855a20; }
    .presenter { grid-area: 3 / 1; padding: 27px 0 0 9px; color: #eee; font-size: 10px; line-height: 15px; }
  `];
  render() {
    return html`
      <main class="window">
        <header class="title">
          <div class="quick">
            ${excelLogo(14)}<button aria-label="Save">${icons.save}</button><button aria-label="Undo">${icons.undo}</button><button aria-label="Undo history">${chev}</button>
            <button class="redo" aria-label="Redo">${icons.redo}</button><button class="pale" aria-label="Redo history">${chev}</button><button aria-label="Customise toolbar">${icons.custom}</button><span class="name">Book1 - Excel</span>
          </div>
          <label class="search">${icons.search}<input type="search" placeholder="Search" aria-label="Search" /></label>
          <div class="sys"><button class="avatar">HG</button>
            <button aria-label="Minimise">${line("M0 4.500h8", 8, 8)}</button><button aria-label="Restore">${line("M.5 2.500h6v6h-6zM2.500 2.500v-2h6v6h-2", 9, 9)}</button><button aria-label="Close">${line("M.5.500l8 8M8.500.500l-8 8", 9, 9)}</button></div>
        </header>
        <nav class="tabs">
          ${["File", "Home", "Insert", "Page Layout", "Formulas", "Data", "Review", "View", "Help"].map((t) => html`<button class=${classMap({ tab: true, on: t === this.tab })} @click=${() => (this.tab = t)}>${t}</button>`)}
          <button class="share">${icons.share}Share ${chev}</button>
        </nav>
        <excel-ribbon></excel-ribbon>
        <excel-sheet></excel-sheet>
        <div class="sheets">
          <div class="names">
            <button aria-label="Previous sheets"><svg width="6" height="8" viewBox="0 0 6 8" fill="none" stroke="#aaa"><path d="M5 .800 1 4l4 3.200"/></svg></button>
            <button aria-label="Next sheets"><svg width="6" height="8" viewBox="0 0 6 8" fill="none" stroke="#aaa"><path d="M1 .800 5 4 1 7.200"/></svg></button>
            <i class="gap"></i>
            ${["Sheet1", "Sheet2", "Sheet3"].map((s) => html`<button class=${classMap({ on: s === this.sheet })} @click=${() => (this.sheet = s)}><span>${s}</span></button>`)}
            <button aria-label="New sheet">${line("M4.500 0v9M0 4.500h9", 9, 9)}</button>
          </div>
          <div class="hbar">
            <svg width="3" height="9" viewBox="0 0 3 9" fill="#555"><path d="M0 0h2v2H0zM0 3.500h2v2H0zM0 7h2v2H0z"/></svg>
            <svg class="left" width="6" height="8" viewBox="0 0 6 8"><path d="M6 0v8L0 4z" fill="#666"/></svg><div class="thumb"></div>
            <svg width="6" height="8" viewBox="0 0 6 8"><path d="M0 0v8l6-4z" fill="#666"/></svg>
          </div>
        </div>
        <div class="status">
          <span>Ready</span><button class="acc">${icons.access}Accessibility: Investigate</button>
          <div class="views">
            <button class="on" aria-label="Normal view">${line("M.5.500h10v10H.5zM4 .500v10M7.200.500v10M.5 4h10M.5 7.200h10", 11, 11)}</button>
            <button aria-label="Page layout view">${line("M.5.500h11v10H.5zM3 2.500h6v6H3zM4.500 4.500h3M4.500 6.500h3", 12, 11)}</button>
            <button aria-label="Page break view">${line("M.5.500h10v10H.5zM3.500.500v6h7M7 .500v6", 11, 11)}</button>
          </div>
          <div class="zoom"><button aria-label="Zoom out">${line("M0 3.500h7", 7, 7)}</button><input type="range" min="0" max="200" value="100" aria-label="Zoom" /><button aria-label="Zoom in">${line("M0 3.500h7M3.500 0v7", 7, 7)}</button><span>100%</span></div>
        </div>
        <task-bar></task-bar>
      </main>
      <aside class="people">
        <figure class="person"><div class="face">S</div><figcaption>Subbu</figcaption></figure>
        <figure class="person"><div class="face tan">HG</div><figcaption>Hari GBS</figcaption></figure>
      </aside>
      <div class="presenter">Hari GBS</div>`;
  }
}
